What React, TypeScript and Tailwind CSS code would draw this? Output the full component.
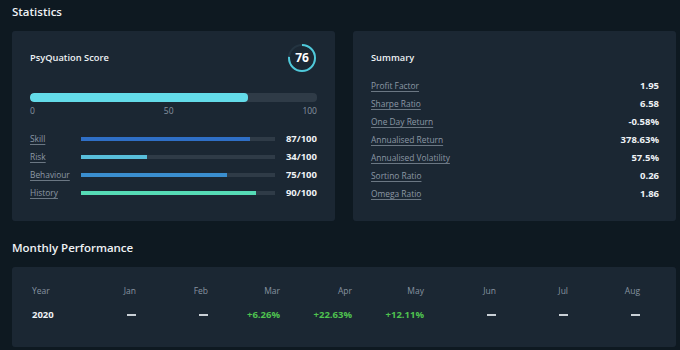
import React from "react";

const subScores = [
  { label: "Skill", value: 87, color: "#2f6fc6" },
  { label: "Risk", value: 34, color: "#58bedb" },
  { label: "Behaviour", value: 75, color: "#3a8ecf" },
  { label: "History", value: 90, color: "#56dbb6" },
];

const summary = [
  ["Profit Factor", "1.95"],
  ["Sharpe Ratio", "6.58"],
  ["One Day Return", "-0.58%"],
  ["Annualised Return", "378.63%"],
  ["Annualised Volatility", "57.5%"],
  ["Sortino Ratio", "0.26"],
  ["Omega Ratio", "1.86"],
];

const months = ["Jan", "Feb", "Mar", "Apr", "May", "Jun", "Jul", "Aug"];
const values: (string | null)[] = [null, null, "+6.26%", "+22.63%", "+12.11%", null, null, null];

function ScoreRing({ value }: { value: number }) {
  const r = 13;
  const c = 2 * Math.PI * r;
  return (
    <div className="relative w-[30px] h-[30px] flex items-center justify-center">
      <svg width="30" height="30" viewBox="0 0 30 30" className="absolute inset-0">
        <circle cx="15" cy="15" r={r} fill="none" stroke="#243441" strokeWidth="2" />
        <circle
          cx="15"
          cy="15"
          r={r}
          fill="none"
          stroke="#4fc9da"
          strokeWidth="2"
          strokeDasharray={`${(c * value) / 100} ${c}`}
          transform="rotate(-90 15 15)"
        />
      </svg>
      <span className="relative text-[12px] font-bold text-white leading-none">{value}</span>
    </div>
  );
}

export default function App() {
  return (
    <div
      className="min-h-[350px] bg-[#0e1921] pl-[12px] pr-[4px] text-white overflow-hidden"
      style={{ fontFamily: '"Open Sans", "Noto Sans", sans-serif' }}
    >
      <h2 className="pt-[3px] h-[31px] text-[11.5px] font-semibold leading-[18px] text-[#eef2f5]">Statistics</h2>
      <div className="grid grid-cols-2 gap-[18px]">
        <div className="bg-[#1b2733] rounded-[3px] h-[190px] pt-[13px] px-[18px]">
          <div className="flex items-center justify-between h-[28px]">
            <span className="text-[9.3px] font-semibold text-[#eef2f5]">PsyQuation Score</span>
            <ScoreRing value={76} />
          </div>
          <div className="mt-[21px] h-[9px] rounded-[4px] bg-[#2f3b47] overflow-hidden">
            <div className="h-full rounded-[4px] bg-[#63dbe9]" style={{ width: "76%" }} />
          </div>
          <div className="mt-[3px] flex justify-between text-[8.5px] leading-[12px] text-[#8793a0]">
            <span>0</span>
            <span>50</span>
            <span>100</span>
          </div>
          <div className="mt-[13px]">
            {subScores.map((s) => (
              <div key={s.label} className="flex items-center h-[18px]">
                <span className="w-[51px] text-[8.4px] text-[#8c98a5] underline underline-offset-2 decoration-[#6b7783]">
                  {s.label}
                </span>
                <div className="w-[194px] h-[4px] bg-[#2f3b47]">
                  <div className="h-full" style={{ width: `${s.value}%`, backgroundColor: s.color }} />
                </div>
                <span className="flex-1 text-right text-[9.5px] font-bold text-[#eef2f5]">{s.value}/100</span>
              </div>
            ))}
          </div>
        </div>
        <div className="bg-[#1b2733] rounded-[3px] h-[190px] pt-[13px] pl-[18px] pr-[17px]">
          <div className="flex items-center h-[28px]">
            <span className="text-[9.3px] font-semibold text-[#eef2f5]">Summary</span>
          </div>
          <div className="mt-[5px]">
            {summary.map(([k, v]) => (
              <div key={k} className="flex items-center justify-between h-[18px]">
                <span className="text-[8.4px] text-[#8c98a5] underline underline-offset-2 decoration-[#6b7783]">{k}</span>
                <span className="text-[9.5px] font-bold text-[#eef2f5]">{v}</span>
              </div>
            ))}
          </div>
        </div>
      </div>
      <h2 className="mt-[18px] h-[28px] text-[11.5px] font-semibold leading-[18px] text-[#eef2f5]">Monthly Performance</h2>
      <div className="bg-[#1b2733] rounded-[3px] h-[80px] pl-[20px] pt-[17px]">
        <div className="grid grid-cols-[32px_repeat(8,72px)] items-center h-[14px] text-[8.5px] text-[#8793a0]">
          <span>Year</span>
          {months.map((m) => (
            <span key={m} className="text-right">{m}</span>
          ))}
        </div>
        <div className="mt-[10px] grid grid-cols-[32px_repeat(8,72px)] items-center h-[14px] text-[9.5px] font-bold">
          <span className="text-[#eef2f5]">2020</span>
          {values.map((v, i) => (
            <span key={i} className="text-right">
              {v ? (
                <span className="text-[#4fc24f]">{v}</span>
              ) : (
                <span className="inline-block w-[9px] h-[2px] bg-[#c9d0d6] align-middle" />
              )}
            </span>
          ))}
        </div>
      </div>
    </div>
  );
}
